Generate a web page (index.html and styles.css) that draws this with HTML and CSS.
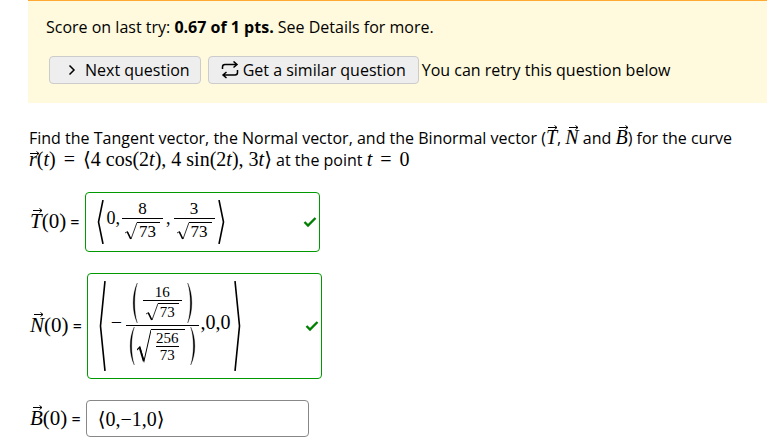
FILE: index.html
```html
<!DOCTYPE html>
<html lang="en">
<head>
  <meta charset="UTF-8" />
  <title>Question</title>
  <link rel="stylesheet" href="styles.css">
</head>
<body>
  <svg class="defs" width="0" height="0" aria-hidden="true">
    <symbol id="arrow" viewBox="0 0 10 5"><path d="M0 2.5H9M6.5 .5L9 2.5L6.5 4.5" fill="none" stroke="#000"/></symbol>
    <symbol id="angle" viewBox="0 0 8 44" preserveAspectRatio="none"><path d="M6 0L1.5 22L6 44" fill="none" stroke="#000" stroke-width="1.6"/></symbol>
    <symbol id="paren" viewBox="0 0 6 40" preserveAspectRatio="none"><path d="M5.3 0C-.2 11 -.2 29 5.3 40C1.8 29 1.8 11 5.3 0Z" fill="#000" stroke="#000" stroke-width=".3"/></symbol>
    <symbol id="root" viewBox="0 0 12 18" preserveAspectRatio="none"><path d="M0 11L2.5 9.5L6 17L12 .5" fill="none" stroke="#000" stroke-width=".8"/><path d="M2.3 10L5.7 17" stroke="#000" stroke-width="1.4"/></symbol>
    <symbol id="check" viewBox="0 0 14 12"><path d="M1.5 6L5 9.5L12.5 2" fill="none" stroke="#008000" stroke-width="2.4"/></symbol>
  </svg>

  <div class="score">
    <p>Score on last try: <strong>0.67 of 1 pts.</strong> See Details for more.</p>
    <div class="actions">
      <button type="button" class="next"><svg width="8" height="12" viewBox="0 0 8 12"><path d="M1.5 1.5L6 6L1.5 10.5" fill="none" stroke="#000" stroke-width="1.5"/></svg>Next question</button>
      <button type="button"><svg width="18" height="18" viewBox="0 0 18 18"><path d="M1.5 8V6Q1.5 3.5 4 3.5H16M12.5 .5L16 3.5L12.5 6.5M16.5 9V11.5Q16.5 14 14 14H2M5.5 11L2 14L5.5 17" fill="none" stroke="#000" stroke-width="1.5"/></svg>Get a similar question</button>
      <span>You can retry this question below</span>
    </div>
  </div>

  <div class="question">
    <p>Find the Tangent vector, the Normal vector, and the Binormal vector (<span class="math"><i class="vec">T<svg><use href="#arrow"/></svg></i></span>, <span class="math"><i class="vec">N<svg><use href="#arrow"/></svg></i></span> and <span class="math"><i class="vec">B<svg><use href="#arrow"/></svg></i></span>) for the curve
      <span class="math"><i class="vec low">r<svg><use href="#arrow"/></svg></i>(<i>t</i>) <span class="eq">=</span> ⟨4 cos(2<i>t</i>), 4 sin(2<i>t</i>), 3<i>t</i>⟩</span> at the point <span class="math"><i>t</i> <span class="eq">=</span> 0</span></p>

    <div class="row">
      <span class="name" id="labelT"><span class="math"><i class="vec">T<svg><use href="#arrow"/></svg></i>(0)</span> =</span>
      <div class="answer correct" role="textbox" contenteditable="true" spellcheck="false" aria-labelledby="labelT">
        <div class="expr">
          <svg class="angle"><use href="#angle"/></svg>
          <span class="num">0,</span>
          <span class="frac">
            <span class="top">8</span>
            <span class="bottom"><svg class="root"><use href="#root"/></svg><span class="under">73</span></span>
          </span>
          <span class="num comma">,</span>
          <span class="frac">
            <span class="top">3</span>
            <span class="bottom"><svg class="root"><use href="#root"/></svg><span class="under">73</span></span>
          </span>
          <svg class="angle right"><use href="#angle"/></svg>
        </div>
        <svg class="check"><use href="#check"/></svg>
      </div>
    </div>

    <div class="row tall">
      <span class="name" id="labelN"><span class="math"><i class="vec">N<svg><use href="#arrow"/></svg></i>(0)</span> =</span>
      <div class="answer correct" role="textbox" contenteditable="true" spellcheck="false" aria-labelledby="labelN">
        <div class="expr">
          <svg class="angle"><use href="#angle"/></svg>
          <span class="num minus">−</span>
          <span class="bigfrac">
            <span class="part">
              <svg class="paren"><use href="#paren"/></svg>
              <span class="frac small">
                <span class="top">16</span>
                <span class="bottom"><svg class="root"><use href="#root"/></svg><span class="under">73</span></span>
              </span>
              <svg class="paren right"><use href="#paren"/></svg>
            </span>
            <span class="part lower">
              <svg class="paren"><use href="#paren"/></svg>
              <svg class="root"><use href="#root"/></svg>
              <span class="under">
                <span class="frac small">
                  <span class="top">256</span>
                  <span class="bottom">73</span>
                </span>
              </span>
              <svg class="paren right"><use href="#paren"/></svg>
            </span>
          </span>
          <span class="num">,0,0</span>
          <svg class="angle right"><use href="#angle"/></svg>
        </div>
        <svg class="check"><use href="#check"/></svg>
      </div>
    </div>

    <div class="row">
      <label class="name" for="answerB"><span class="math"><i class="vec">B<svg><use href="#arrow"/></svg></i>(0)</span> =</label>
      <input type="text" class="answer" id="answerB" value="⟨0,−1,0⟩">
    </div>
  </div>
</body>
</html>
```
FILE: styles.css
```css
body {
  margin: 0 0 0 28px;
  background: #fff;
  color: #000;
  font: 16px/21px "Open Sans", "Noto Sans", sans-serif;
}
p {
  margin: 0;
}
.defs {
  position: absolute;
}
.score {
  background: #fff9dd;
  border-top: 1px solid #ffa834;
  padding: 16px 18px 19px;
}
.actions {
  display: flex;
  align-items: center;
  gap: 7px;
  margin: 18px 0 0 3px;
}
.actions span {
  margin-left: -4px;
}
button {
  display: flex;
  align-items: center;
  justify-content: center;
  gap: 4px;
  height: 28px;
  padding: 0 12px;
  background: #eee;
  border: 1px solid #ccc;
  border-radius: 4px;
  color: #000;
  font: inherit;
  cursor: pointer;
}
.next {
  gap: 9px;
  padding: 0 10px 0 18px;
}
.question {
  padding: 24px 0 0 1px;
}
.math {
  font-family: "Liberation Serif", "DejaVu Serif", serif;
  font-size: 20px;
  line-height: 20px;
  white-space: nowrap;
}
.eq {
  margin: 0 3px;
}
.vec {
  position: relative;
}
.vec svg {
  position: absolute;
  top: -1px;
  left: 50%;
  width: 10px;
  height: 5px;
  margin-left: -3px;
}
.low svg {
  top: 3px;
}
.row {
  display: flex;
  align-items: center;
  margin-top: 21px;
}
.name {
  margin: 0 5px 0 1px;
  white-space: nowrap;
}
.name .math {
  font-size: 21px;
}
.answer {
  display: flex;
  align-items: center;
  justify-content: space-between;
  box-sizing: border-box;
  width: 235px;
  padding: 7px 2px 7px 11px;
  border: 1px solid #888;
  border-radius: 4px;
  font: 18px/20px "Liberation Serif", "DejaVu Serif", serif;
}
input.answer {
  width: 223px;
  height: 37px;
  font-size: 20px;
}
.correct {
  border-color: #090;
}
.expr, .part {
  display: flex;
  align-items: center;
}
.expr {
  gap: 2px;
}
.angle {
  width: 8px;
  height: 44px;
}
.tall .angle {
  height: 90px;
}
.right {
  transform: scaleX(-1);
}
.num {
  margin-bottom: 9px;
}
.comma {
  margin: 0 1px 9px;
}
.tall .num {
  font-size: 20px;
}
.minus {
  margin: 0 2px 9px;
}
.frac {
  display: flex;
  flex-direction: column;
  text-align: center;
  font-size: 17px;
  line-height: 18px;
}
.bottom {
  display: flex;
  justify-content: center;
  border-top: 1px solid #000;
  padding: 3px;
}
.under {
  border-top: 1px solid #000;
  padding: 0 4px 0 2px;
}
.root {
  width: 12px;
  height: 18px;
}
.small {
  font-size: 15px;
  line-height: 16px;
}
.small .bottom {
  padding: 2px 3px;
}
.bigfrac {
  display: flex;
  flex-direction: column;
}
.part {
  justify-content: center;
  gap: 5px;
  height: 43px;
  padding: 0 3px;
}
.lower {
  gap: 0;
  height: 40px;
  padding-bottom: 5px;
  border-top: 1px solid #000;
}
.paren {
  width: 6px;
  height: 40px;
}
.lower .paren {
  height: 38px;
}
.lower .right {
  margin-left: 5px;
}
.lower .root {
  width: 14px;
  height: 34px;
  margin-left: 2px;
}
.lower .under {
  padding: 0 6px 0 5px;
}
.lower .small .bottom {
  padding: 0 2px;
}
.check {
  width: 14px;
  height: 12px;
}
```
